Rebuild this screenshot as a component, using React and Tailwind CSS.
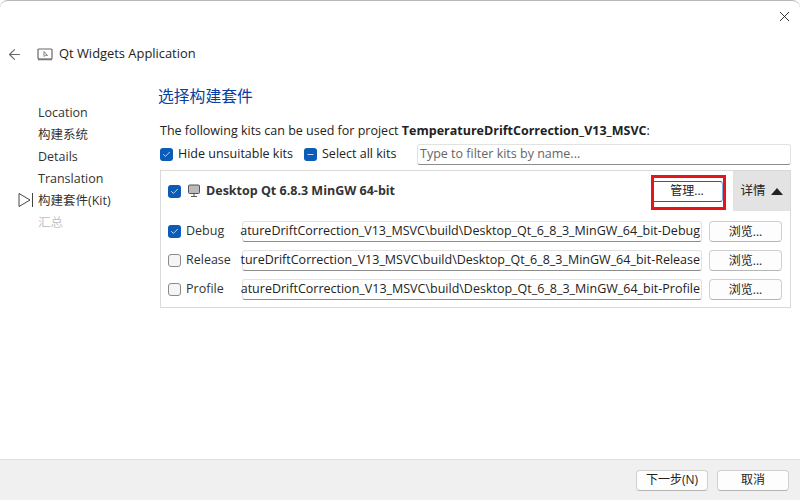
import { ArrowLeft, X, Check, Minus } from 'lucide-react'

const font = { fontFamily: '"Open Sans", "Noto Sans CJK SC", sans-serif' }

const steps = ['Location', '构建系统', 'Details', 'Translation', '构建套件(Kit)', '汇总']

const builds = [
  { name: 'Debug', checked: true, path: 'atureDriftCorrection_V13_MSVC\\build\\Desktop_Qt_6_8_3_MinGW_64_bit-Debug' },
  { name: 'Release', checked: false, path: 'tureDriftCorrection_V13_MSVC\\build\\Desktop_Qt_6_8_3_MinGW_64_bit-Release' },
  { name: 'Profile', checked: false, path: 'atureDriftCorrection_V13_MSVC\\build\\Desktop_Qt_6_8_3_MinGW_64_bit-Profile' },
]

function Box({ state }) {
  if (state === 'off') {
    return <span className="w-[13px] h-[13px] shrink-0 rounded-[3px] border border-[#8a8a8a] bg-[#f5f5f5]" />
  }
  return (
    <span className="w-[13px] h-[13px] shrink-0 rounded-[3px] bg-[#0a5cb8] flex items-center justify-center text-white">
      {state === 'mixed' ? <Minus size={9} strokeWidth={2} /> : <Check size={9} strokeWidth={2} />}
    </span>
  )
}

function PushButton({ children, className = '' }) {
  return (
    <button className={`h-[21px] rounded-[4px] border border-[#d0d0d0] border-b-[#b5b5b5] bg-[#fdfdfd] text-[12px] text-[#222] flex items-center justify-center ${className}`}>
      {children}
    </button>
  )
}

export default function App() {
  return (
    <div style={font} className="w-[800px] h-[500px] flex flex-col bg-white text-[12.5px] text-[#222] overflow-hidden rounded-t-lg border-t border-[#b8b8b8]">
      <div className="h-[29px] shrink-0 flex justify-end items-center pr-[7px] pt-[1px]">
        <X size={17} strokeWidth={1.2} className="text-[#111]" />
      </div>

      <div className="h-[49px] shrink-0 flex items-center pl-[6px] pb-[1px]">
        <ArrowLeft size={17} strokeWidth={1.5} className="text-[#666]" />
        <svg width="16" height="13" viewBox="0 0 16 13" className="ml-[14px]" fill="none">
          <rect x="1" y="1" width="14" height="10" rx="1" stroke="#666" strokeWidth="1.2" />
          <path d="M1 11.5h14" stroke="#777" strokeWidth="1.4" />
          <path d="M7 3.5v5l1.3-1.2 2.2.2z" stroke="#666" strokeWidth="0.8" />
        </svg>
        <span className="ml-[6px] text-[12.9px]">Qt Widgets Application</span>
      </div>

      <div className="flex-1 flex min-h-0">
        <div className="w-[158px] shrink-0 pt-[23px] relative">
          {steps.map((s, i) => (
            <div key={s} className={`h-[22px] pl-[38px] flex items-center text-[12.5px] ${i === 5 ? 'text-[#c4c4c4]' : 'text-[#333]'}`}>
              {s}
            </div>
          ))}
          <svg width="16" height="16" viewBox="0 0 16 16" fill="none" className="absolute left-[18px] top-[113px]">
            <path d="M1 1.5v13L12 8z" stroke="#444" strokeWidth="1" />
            <path d="M14.5 1v14" stroke="#444" strokeWidth="1" />
          </svg>
        </div>

        <div className="flex-1 min-w-0 pr-[9px] pt-[5px]">
          <div className="h-[26px] flex items-center text-[15.8px] text-[#0b3d9c]">选择构建套件</div>
          <div className="pl-[2px] h-[22px] mt-[10px] flex items-center text-[12.5px]">
            The following kits can be used for project&nbsp;<b>TemperatureDriftCorrection_V13_MSVC</b>:
          </div>
          <div className="pl-[2px] h-[22px] mt-[1px] flex items-center">
            <Box state="on" />
            <span className="ml-[5px]">Hide unsuitable kits</span>
            <span className="ml-[11px]"><Box state="mixed" /></span>
            <span className="ml-[5px]">Select all kits</span>
            <div className="ml-auto w-[374px] h-[21px] rounded-[3px] border border-[#e2e2e2] border-b-[#8c8c8c] px-[2px] flex items-center text-[#666]">
              Type to filter kits by name...
            </div>
          </div>

          <div className="relative ml-[2px] mt-[5px] h-[138px] border border-[#d9d9d9]">
            <div className="h-[40px] flex items-center pl-[7px]">
              <Box state="on" />
              <svg width="14" height="14" viewBox="0 0 14 14" className="ml-[6px]" fill="none">
                <rect x="1.5" y="1" width="11" height="8.5" rx="1" fill="#bbb" stroke="#555" />
                <path d="M7 9.5V12M4 12.5h6" stroke="#555" />
              </svg>
              <b className="ml-[5px] text-[12.5px] text-[#333]">Desktop Qt 6.8.3 MinGW 64-bit</b>
              <button className="ml-auto w-[72px] h-[21px] rounded-[3px] border border-[#0a64c0] border-x-[#7fb0e0] bg-white text-[12px] flex items-center justify-center">
                管理...
              </button>
              <div className="ml-[10px] w-[57px] h-full bg-[#e3e3e3] flex items-center justify-center gap-[5px] text-[12.5px]">
                详情
                <span className="w-0 h-0 border-x-[6.5px] border-x-transparent border-b-[7px] border-b-[#222]" />
              </div>
            </div>

            <div className="pt-[10px] flex flex-col gap-[8px]">
              {builds.map((b) => (
                <div key={b.name} className="h-[21px] flex items-center pl-[7px] pr-[8px]">
                  <Box state={b.checked ? 'on' : 'off'} />
                  <span className="ml-[5px] w-[56px] text-[#333]">{b.name}</span>
                  <div className="w-[460px] h-[21px] rounded-[3px] border border-[#e2e2e2] border-b-[#8c8c8c] flex justify-end items-center pr-[1px]">
                    <span className="whitespace-nowrap">{b.path}</span>
                  </div>
                  <PushButton className="ml-[7px] w-[73px]">浏览...</PushButton>
                </div>
              ))}
            </div>

            <div className="absolute left-[490px] top-[4px] w-[75px] h-[35px] border-[3px] border-[#e8141c]" />
          </div>
        </div>
      </div>

      <div className="h-[41px] shrink-0 bg-[#f0f0f0] border-t border-[#dfdfdf] flex items-center justify-end gap-[9px] pr-[11px]">
        <PushButton className="w-[72px]">下一步(N)</PushButton>
        <PushButton className="w-[72px]">取消</PushButton>
      </div>
    </div>
  )
}
